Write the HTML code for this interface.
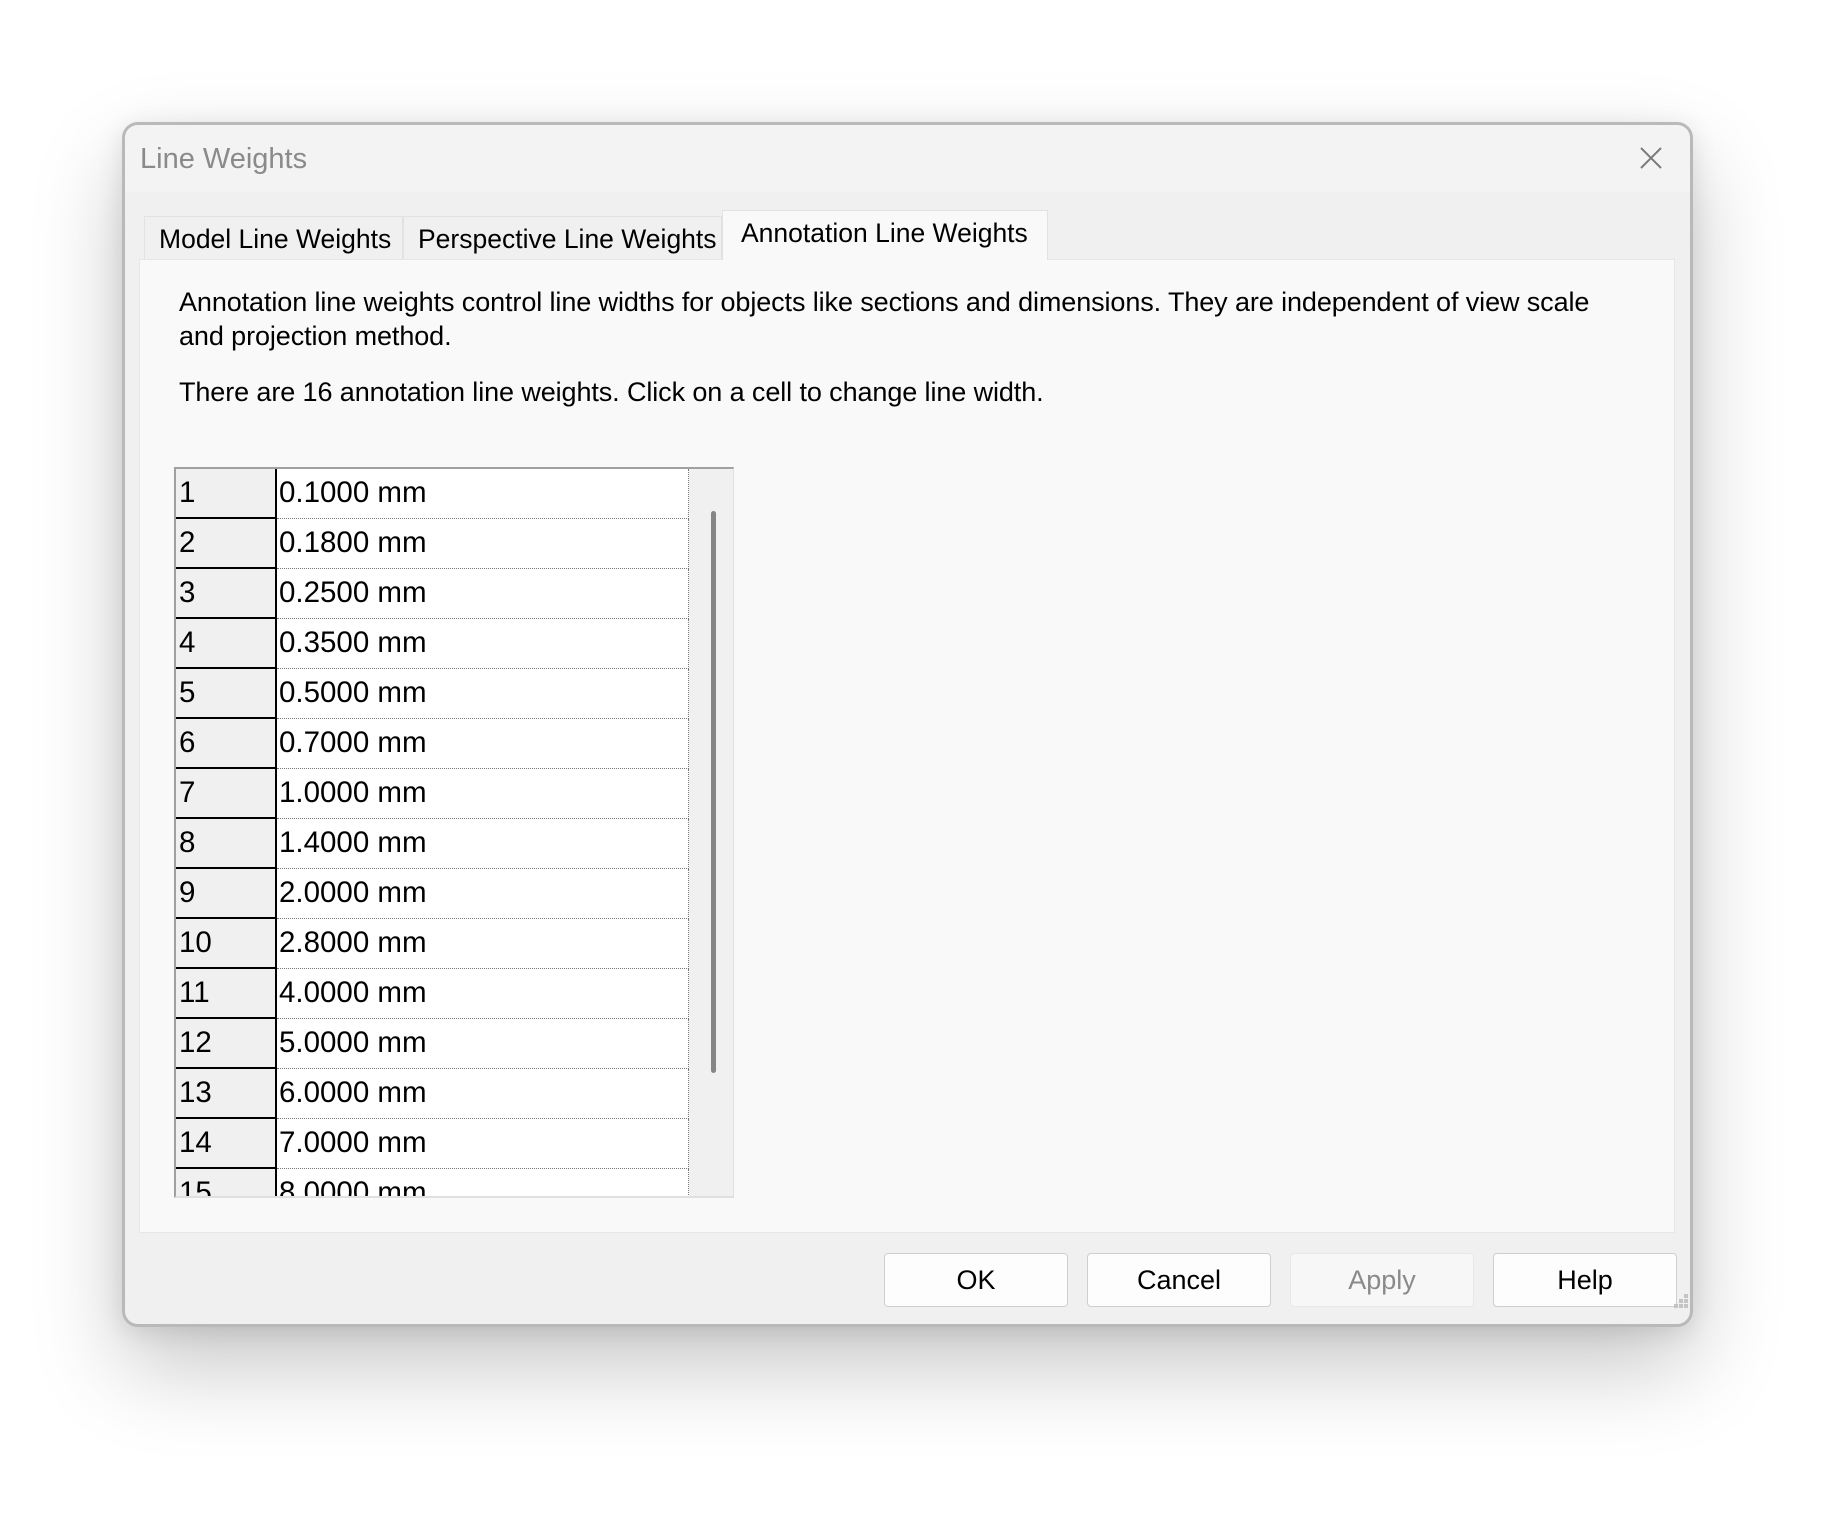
<!DOCTYPE html>
<html><head><meta charset="utf-8"><style>
*{margin:0;padding:0;box-sizing:border-box}
body{width:1837px;height:1522px;background:#fff;position:relative;overflow:hidden;font-family:"Liberation Sans","DejaVu Sans",sans-serif;color:#000}
.dlg{position:absolute;left:122px;top:122px;width:1571px;height:1205px;background:#f0f0f0;border:3px solid #b9b9b9;border-radius:16px;box-shadow:0 40px 90px rgba(0,0,0,0.22),0 5px 25px rgba(0,0,0,0.10);overflow:hidden}
.abs{position:absolute}
.title{left:15px;top:-1px;height:70px;line-height:70px;font-size:29px;color:#8a8a8a}
.tbar{left:0;top:0;width:100%;height:67px;background:#f3f3f3}
.tab{position:absolute;background:#f0f0f0;border:1px solid #e2e2e2;border-bottom:none;font-size:26.5px;white-space:nowrap}
.panel{left:14px;top:134px;width:1536px;height:974px;background:#f9f9f9;border:1px solid #e6e6e6}
.p{font-size:27px;line-height:34px;white-space:nowrap;letter-spacing:-0.1px}
.tbl{left:34px;top:207px;width:560px;height:731px;background:#f0f0f0;border-top:2px solid #a0a0a0;border-left:2px solid #a0a0a0;border-bottom:2px solid #e0e0e0;border-right:1px solid #e0e0e0;overflow:hidden}
.row{position:absolute;left:0;height:50px;width:540px;font-size:29.5px}
.c1{position:absolute;left:0;top:0;width:101px;height:50px;background:#f0f0f0;border-bottom:2px solid #000;border-right:2px solid #000;padding-left:3px;line-height:47px}
.c2{position:absolute;left:101px;top:0;width:412px;height:50px;background:#fff;border-bottom:1px dotted #777;border-right:1px dotted #777;padding-left:2px;line-height:47px}
.thumb{left:535px;top:42px;width:5px;height:562px;background:#858585;border-radius:3px}
.btn{position:absolute;top:1128px;width:184px;height:54px;background:#fdfdfd;border:1px solid #cfcfcf;border-radius:4px;font-size:27px;text-align:center;line-height:52px}
</style></head><body>
<div class="dlg">
 <div class="abs tbar"></div>
 <div class="abs title">Line Weights</div>
 <svg class="abs" style="left:1514px;top:21px" width="24" height="24" viewBox="0 0 24 24"><path d="M2 2L22 22M22 2L2 22" stroke="#7a7a7a" stroke-width="2"/></svg>
 <div class="tab" style="left:19px;top:91px;width:259px;height:43px;padding-left:14px;line-height:44px">Model Line Weights</div>
 <div class="tab" style="left:278px;top:91px;width:319px;height:43px;padding-left:14px;line-height:44px">Perspective Line Weights</div>
 <div class="tab" style="left:597px;top:85px;width:326px;height:50px;padding-left:18px;line-height:44px;background:#f9f9f9;z-index:2">Annotation Line Weights</div>
 <div class="abs panel">
  <div class="abs p" style="left:39px;top:25px">Annotation line weights control line widths for objects like sections and dimensions. They are independent of view scale</div>
  <div class="abs p" style="left:39px;top:59px">and projection method.</div>
  <div class="abs p" style="left:39px;top:115px">There are 16 annotation line weights. Click on a cell to change line width.</div>
  <div class="abs tbl">
   <div class="row" style="top:0"><div class="c1">1</div><div class="c2">0.1000 mm</div></div>
   <div class="row" style="top:50px"><div class="c1">2</div><div class="c2">0.1800 mm</div></div>
   <div class="row" style="top:100px"><div class="c1">3</div><div class="c2">0.2500 mm</div></div>
   <div class="row" style="top:150px"><div class="c1">4</div><div class="c2">0.3500 mm</div></div>
   <div class="row" style="top:200px"><div class="c1">5</div><div class="c2">0.5000 mm</div></div>
   <div class="row" style="top:250px"><div class="c1">6</div><div class="c2">0.7000 mm</div></div>
   <div class="row" style="top:300px"><div class="c1">7</div><div class="c2">1.0000 mm</div></div>
   <div class="row" style="top:350px"><div class="c1">8</div><div class="c2">1.4000 mm</div></div>
   <div class="row" style="top:400px"><div class="c1">9</div><div class="c2">2.0000 mm</div></div>
   <div class="row" style="top:450px"><div class="c1">10</div><div class="c2">2.8000 mm</div></div>
   <div class="row" style="top:500px"><div class="c1">11</div><div class="c2">4.0000 mm</div></div>
   <div class="row" style="top:550px"><div class="c1">12</div><div class="c2">5.0000 mm</div></div>
   <div class="row" style="top:600px"><div class="c1">13</div><div class="c2">6.0000 mm</div></div>
   <div class="row" style="top:650px"><div class="c1">14</div><div class="c2">7.0000 mm</div></div>
   <div class="row" style="top:700px"><div class="c1">15</div><div class="c2">8.0000 mm</div></div>
   <div class="abs thumb"></div>
  </div>
 </div>
 <div class="btn" style="left:759px">OK</div>
 <div class="btn" style="left:962px">Cancel</div>
 <div class="btn" style="left:1165px;color:#8a8a8a;background:#f7f7f7;border-color:#e8e8e8">Apply</div>
 <div class="btn" style="left:1368px">Help</div>
 <svg class="abs" style="left:1548px;top:1168px" width="16" height="16" viewBox="0 0 16 16" fill="#c4c4c4"><rect x="11" y="1" width="4" height="4"/><rect x="11" y="6" width="4" height="4"/><rect x="6" y="6" width="4" height="4"/><rect x="11" y="11" width="4" height="4"/><rect x="6" y="11" width="4" height="4"/><rect x="1" y="11" width="4" height="4"/></svg>
</div>
</body></html>
